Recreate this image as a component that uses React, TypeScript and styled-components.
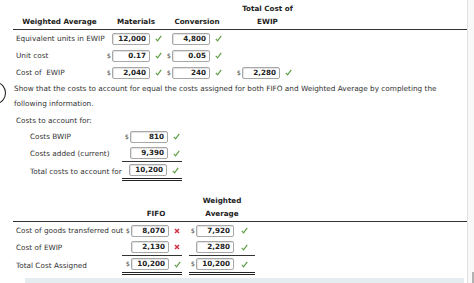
import React from 'react';
import styled, { createGlobalStyle } from 'styled-components';

type Rule = 'single' | 'double';
type Mark = 'ok' | 'wrong';

const GlobalStyle = createGlobalStyle`
  html, body {
    margin: 0;
    padding: 0;
    background: #fff;
  }
  body {
    font-family: "DejaVu Sans", Verdana, sans-serif;
    font-size: 7.3px;
    color: #333;
  }
`;

const TOP_COLS = '93px 60px 62px 79px';
const COSTS_COLS = '92px 60px';
const ASSIGNED_COLS = '109px 60px 7px 66px';

const App = () => (
   <>
      <GlobalStyle />
      <Page>
         <Content>
            <StepMarker />

            <Table>
               <HeadRow $cols={TOP_COLS}>
                  <HeadCell>Weighted Average</HeadCell>
                  <HeadCell>Materials</HeadCell>
                  <HeadCell>Conversion</HeadCell>
                  <HeadCell>
                     Total Cost of
                     <br />
                     EWIP
                  </HeadCell>
               </HeadRow>
               <Row $cols={TOP_COLS}>
                  <Label>Equivalent units in EWIP</Label>
                  <Value lead={6} amount="12,000" mark="ok" />
                  <Value lead={6} amount="4,800" mark="ok" />
                  <span />
               </Row>
               <Row $cols={TOP_COLS}>
                  <Label>Unit cost</Label>
                  <Value lead={6} dollar amount="0.17" mark="ok" />
                  <Value lead={6} dollar amount="0.05" mark="ok" />
                  <span />
               </Row>
               <Row $cols={TOP_COLS}>
                  <Label>Cost of &nbsp;EWIP</Label>
                  <Value lead={6} dollar amount="2,040" mark="ok" />
                  <Value lead={6} dollar amount="240" mark="ok" />
                  <Value lead={14} dollar amount="2,280" mark="ok" />
               </Row>
            </Table>

            <Instructions>
               Show that the costs to account for equal the costs assigned for both FIFO and Weighted Average by
               completing the following information.
            </Instructions>

            <SubTitle>Costs to account for:</SubTitle>

            <Table $indent={17}>
               <Row $cols={COSTS_COLS}>
                  <Label $pad={0}>Costs BWIP</Label>
                  <Value lead={8} dollar amount="810" mark="ok" />
               </Row>
               <Row $cols={COSTS_COLS}>
                  <Label $pad={0}>Costs added (current)</Label>
                  <Value lead={8} amount="9,390" mark="ok" rule="single" />
               </Row>
               <Row $cols={COSTS_COLS} $total>
                  <Label $pad={0}>Total costs to account for</Label>
                  <Value lead={7} amount="10,200" mark="ok" rule="double" />
               </Row>
            </Table>

            <Table $gap={13}>
               <HeadRow $cols={ASSIGNED_COLS}>
                  <span />
                  <HeadCell $shift={8}>FIFO</HeadCell>
                  <span />
                  <HeadCell>
                     Weighted
                     <br />
                     Average
                  </HeadCell>
               </HeadRow>
               <Row $cols={ASSIGNED_COLS}>
                  <Label>Cost of goods transferred out</Label>
                  <Value lead={9} dollar amount="8,070" mark="wrong" />
                  <span />
                  <Value lead={7} dollar amount="7,920" mark="ok" markGap={7} />
               </Row>
               <Row $cols={ASSIGNED_COLS}>
                  <Label>Cost of EWIP</Label>
                  <Value lead={9} amount="2,130" mark="wrong" rule="single" />
                  <span />
                  <Value lead={7} amount="2,280" mark="ok" markGap={7} rule="single" />
               </Row>
               <Row $cols={ASSIGNED_COLS} $total>
                  <Label>Total Cost Assigned</Label>
                  <Value lead={9} dollar amount="10,200" mark="ok" rule="double" />
                  <span />
                  <Value lead={7} dollar amount="10,200" mark="ok" markGap={7} rule="double" />
               </Row>
            </Table>

            <NextPanel />
         </Content>
         <ScrollTrack>
            <ScrollThumb />
         </ScrollTrack>
      </Page>
   </>
);

export default App;

interface ValueProps {
   lead: number;
   amount: string;
   mark: Mark;
   dollar?: boolean;
   rule?: Rule;
   markGap?: number;
}

const Value = ({ lead, amount, mark, dollar, rule, markGap = 5 }: ValueProps) => (
   <ValueCell $lead={lead} $rule={rule}>
      <Dollar>{dollar ? '$' : ''}</Dollar>
      <AmountBox>{amount}</AmountBox>
      <MarkSlot $gap={markGap}>{mark === 'ok' ? <CheckIcon /> : <CrossIcon />}</MarkSlot>
   </ValueCell>
);

const CheckIcon = () => (
   <svg width="7" height="7" viewBox="0 0 7 7">
      <path d="M0.8 3.9 L2.6 5.8 L6.2 0.9" fill="none" stroke="#5e9f45" strokeWidth="1.2" />
   </svg>
);

const CrossIcon = () => (
   <svg width="6" height="6" viewBox="0 0 6 6">
      <path d="M1 1 L5 5 M5 1 L1 5" fill="none" stroke="#d42f48" strokeWidth="1.5" />
   </svg>
);

const Page = styled.div`
   display: flex;
   width: 474px;
   height: 283px;
   overflow: hidden;
`;

const Content = styled.div`
   position: relative;
   flex: 1;
   padding: 2px 0 0 13px;
`;

const StepMarker = styled.div`
   position: absolute;
   left: -14px;
   top: 82px;
   width: 18px;
   height: 20px;
   border: 1.5px solid #151515;
   border-radius: 50%;
`;

const Table = styled.div<{ $indent?: number; $gap?: number }>`
   display: flex;
   flex-direction: column;
   margin-left: ${p => p.$indent ?? 0}px;
   margin-top: ${p => p.$gap ?? 0}px;
`;

const Row = styled.div<{ $cols: string; $total?: boolean }>`
   display: grid;
   grid-template-columns: ${p => p.$cols};
   height: ${p => (p.$total ? 19 : 17)}px;
   align-items: stretch;
`;

const HeadRow = styled(Row)`
   height: auto;
   align-items: end;
   padding-bottom: 1px;
   border-bottom: 1px solid #333;
`;

const HeadCell = styled.div<{ $shift?: number }>`
   text-align: center;
   font-size: 7.2px;
   font-weight: bold;
   color: #222;
   line-height: 13px;
   padding-left: ${p => p.$shift ?? 0}px;
`;

const Label = styled.div<{ $pad?: number }>`
   display: flex;
   align-items: center;
   padding-left: ${p => p.$pad ?? 3}px;
   white-space: nowrap;
`;

const ValueCell = styled.div<{ $lead: number; $rule?: Rule }>`
   box-sizing: border-box;
   display: grid;
   grid-template-columns: ${p => p.$lead}px 38px 1fr;
   align-items: center;
   border-bottom: ${p =>
      p.$rule === 'double' ? '3px double #222' : p.$rule === 'single' ? '1px solid #333' : '0'};
`;

const Dollar = styled.span`
   text-align: right;
   padding-right: 1px;
   font-size: 6.5px;
   color: #555;
`;

const AmountBox = styled.div`
   box-sizing: border-box;
   height: 12px;
   padding-right: 3px;
   border: 1px solid #a8a8a8;
   border-radius: 2px;
   box-shadow: inset 1px 1px 1px rgba(0, 0, 0, 0.12);
   background: #fff;
   text-align: right;
   font-size: 7.2px;
   font-weight: bold;
   line-height: 10px;
   color: #222;
`;

const MarkSlot = styled.span<{ $gap: number }>`
   display: flex;
   align-items: center;
   padding-left: ${p => p.$gap}px;
`;

const Instructions = styled.p`
   margin: 1px 0 0;
   padding-left: 1px;
   max-width: 432px;
   line-height: 14.5px;
`;

const SubTitle = styled.div`
   margin-top: 3px;
   padding-left: 3px;
   line-height: 14px;
`;

const NextPanel = styled.div`
   margin: 3px 0 0 12px;
   width: 439px;
   height: 12px;
   background: #e6edf1;
`;

const ScrollTrack = styled.div`
   display: flex;
   flex-direction: column;
   justify-content: flex-end;
   width: 6px;
   border-left: 1px solid #e2e2e2;
   background: #f8f8f8;
`;

const ScrollThumb = styled.div`
   margin-left: 4px;
   width: 2px;
   height: 11px;
   background: #b2b2b2;
`;
